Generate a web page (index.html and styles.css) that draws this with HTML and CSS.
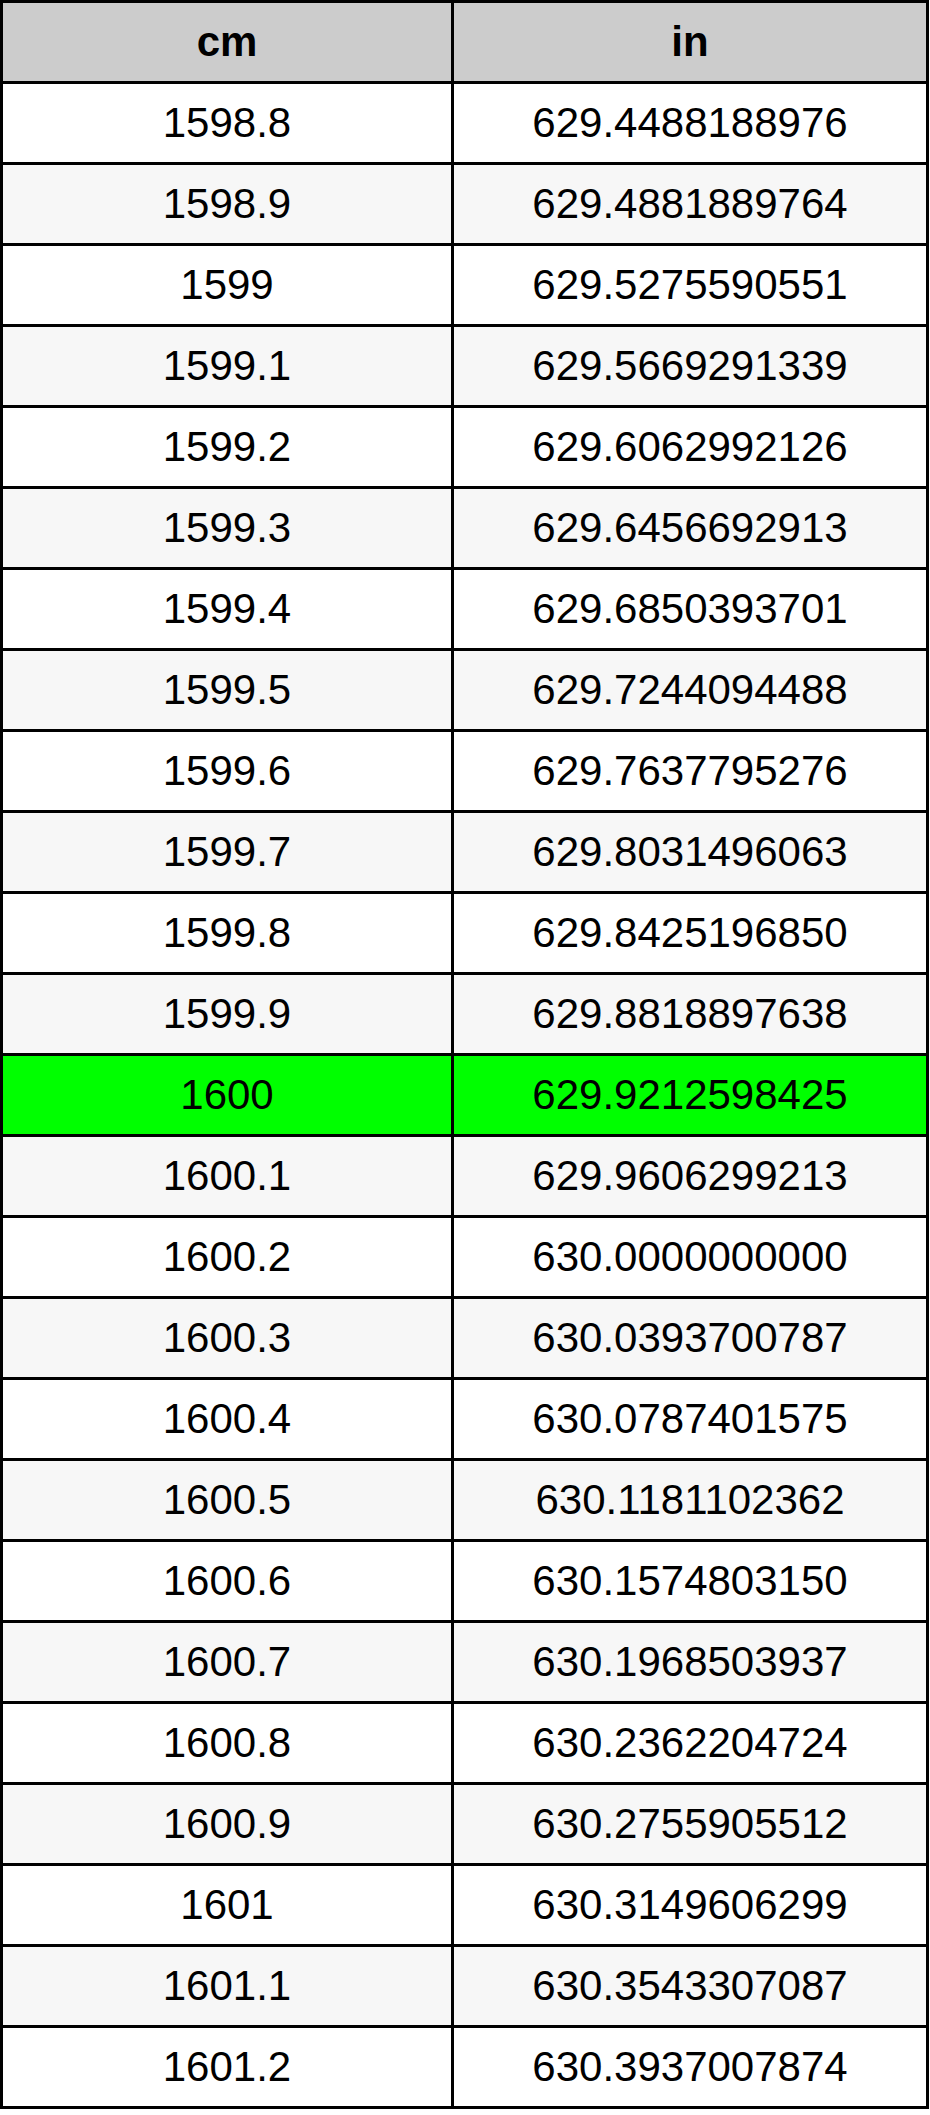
FILE: index.html
```html
<!DOCTYPE html>
<html lang="en">
<head>
<meta charset="utf-8">
<title>cm to in</title>
<link rel="stylesheet" href="styles.css">
</head>
<body>
<table class="conv">
  <thead>
    <tr><th class="col-cm">cm</th><th class="col-in">in</th></tr>
  </thead>
  <tbody>
    <tr><td>1598.8</td><td>629.4488188976</td></tr>
    <tr><td>1598.9</td><td>629.4881889764</td></tr>
    <tr><td>1599</td><td>629.5275590551</td></tr>
    <tr><td>1599.1</td><td>629.5669291339</td></tr>
    <tr><td>1599.2</td><td>629.6062992126</td></tr>
    <tr><td>1599.3</td><td>629.6456692913</td></tr>
    <tr><td>1599.4</td><td>629.6850393701</td></tr>
    <tr><td>1599.5</td><td>629.7244094488</td></tr>
    <tr><td>1599.6</td><td>629.7637795276</td></tr>
    <tr><td>1599.7</td><td>629.8031496063</td></tr>
    <tr><td>1599.8</td><td>629.8425196850</td></tr>
    <tr><td>1599.9</td><td>629.8818897638</td></tr>
    <tr class="hit"><td>1600</td><td>629.9212598425</td></tr>
    <tr><td>1600.1</td><td>629.9606299213</td></tr>
    <tr><td>1600.2</td><td>630.0000000000</td></tr>
    <tr><td>1600.3</td><td>630.0393700787</td></tr>
    <tr><td>1600.4</td><td>630.0787401575</td></tr>
    <tr><td>1600.5</td><td>630.1181102362</td></tr>
    <tr><td>1600.6</td><td>630.1574803150</td></tr>
    <tr><td>1600.7</td><td>630.1968503937</td></tr>
    <tr><td>1600.8</td><td>630.2362204724</td></tr>
    <tr><td>1600.9</td><td>630.2755905512</td></tr>
    <tr><td>1601</td><td>630.3149606299</td></tr>
    <tr><td>1601.1</td><td>630.3543307087</td></tr>
    <tr><td>1601.2</td><td>630.3937007874</td></tr>
  </tbody>
</table>
</body>
</html>
```
FILE: styles.css
```css
html, body {
  margin: 0;
  padding: 0;
  background: #ffffff;
}

.conv {
  table-layout: fixed;
  width: 929px;
  border-collapse: separate;
  border-spacing: 0;
  border-top: 3px solid #000;
  border-left: 3px solid #000;
  font-family: "Liberation Sans", Arial, sans-serif;
  font-size: 42px;
  color: #000;
}

.conv th,
.conv td {
  padding: 0;
  height: 78px;
  line-height: 78px;
  text-align: center;
  border-right: 3px solid #000;
  border-bottom: 3px solid #000;
  white-space: nowrap;
}

.conv th {
  background: #cccccc;
  font-weight: bold;
}

.conv .col-cm {
  width: 448px;
}

.conv tbody tr:nth-child(odd) td {
  background: #ffffff;
}

.conv tbody tr:nth-child(even) td {
  background: #f7f7f7;
}

.conv tbody tr.hit td {
  background: #00ff00;
}
```
